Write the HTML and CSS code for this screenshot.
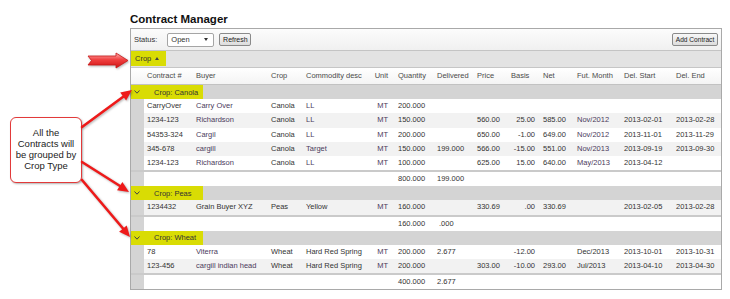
FILE: index.html
```html
<!DOCTYPE html>
<html>
<head>
<meta charset="utf-8">
<title>Contract Manager</title>
<link rel="stylesheet" href="styles.css">
</head>
<body>
<div class="page">
  <h1 class="title">Contract Manager</h1>
  <div class="panel">
    <div class="toolbar">
      <span class="lbl">Status:</span>
      <span class="select">Open<span class="caret"></span></span>
      <span class="btn refresh">Refresh</span>
      <span class="btn add">Add Contract</span>
    </div>
    <div class="groupby"><span class="chip">Crop <span class="up"></span></span></div>
    <div class="row head">
      <span class="ind"></span><span>Contract #</span><span>Buyer</span><span>Crop</span><span>Commodity desc</span><span class="r unit">Unit</span><span>Quantity</span><span>Delivered</span><span>Price</span><span class="basis-h">Basis</span><span>Net</span><span>Fut. Month</span><span>Del. Start</span><span>Del. End</span>
    </div>

    <div class="gbar"><span class="hl"><svg class="chev" width="6" height="4" viewBox="0 0 6 4"><polyline points="0.5,0.5 3,3.2 5.5,0.5"/></svg><span class="gtxt">Crop: Canola</span></span></div>
    <div class="row data"><span class="ind"></span><span>CarryOver</span><span class="lk">Carry Over</span><span>Canola</span><span class="lk">LL</span><span class="r unit lk">MT</span><span>200.000</span><span></span><span></span><span class="r basis"></span><span></span><span></span><span></span><span></span></div>
    <div class="row data alt"><span class="ind"></span><span>1234-123</span><span class="lk">Richardson</span><span>Canola</span><span class="lk">LL</span><span class="r unit lk">MT</span><span>150.000</span><span></span><span>560.00</span><span class="r basis">25.00</span><span>585.00</span><span class="lk">Nov/2012</span><span>2013-02-01</span><span>2013-02-28</span></div>
    <div class="row data"><span class="ind"></span><span>54353-324</span><span class="lk">Cargil</span><span>Canola</span><span class="lk">LL</span><span class="r unit lk">MT</span><span>200.000</span><span></span><span>650.00</span><span class="r basis">-1.00</span><span>649.00</span><span class="lk">Nov/2012</span><span>2013-11-01</span><span>2013-11-29</span></div>
    <div class="row data alt"><span class="ind"></span><span>345-678</span><span class="lk">cargill</span><span>Canola</span><span class="lk">Target</span><span class="r unit lk">MT</span><span>150.000</span><span>199.000</span><span>566.00</span><span class="r basis">-15.00</span><span>551.00</span><span class="lk">Nov/2013</span><span>2013-09-19</span><span>2013-09-30</span></div>
    <div class="row data"><span class="ind"></span><span>1234-123</span><span class="lk">Richardson</span><span>Canola</span><span class="lk">LL</span><span class="r unit lk">MT</span><span>100.000</span><span></span><span>625.00</span><span class="r basis">15.00</span><span>640.00</span><span class="lk">May/2013</span><span>2013-04-12</span><span></span></div>
    <div class="row sum"><span class="ind"></span><span></span><span></span><span></span><span></span><span></span><span>800.000</span><span>199.000</span><span></span><span></span><span></span><span></span><span></span><span></span></div>

    <div class="gbar"><span class="hl"><svg class="chev" width="6" height="4" viewBox="0 0 6 4"><polyline points="0.5,0.5 3,3.2 5.5,0.5"/></svg><span class="gtxt">Crop: Peas</span></span></div>
    <div class="row data alt"><span class="ind"></span><span>1234432</span><span>Grain Buyer XYZ</span><span>Peas</span><span>Yellow</span><span class="r unit lk">MT</span><span>160.000</span><span></span><span>330.69</span><span class="r basis">.00</span><span>330.69</span><span></span><span>2013-02-05</span><span>2013-02-28</span></div>
    <div class="row sum"><span class="ind"></span><span></span><span></span><span></span><span></span><span></span><span>160.000</span><span class="dot">.000</span><span></span><span></span><span></span><span></span><span></span><span></span></div>

    <div class="gbar"><span class="hl"><svg class="chev" width="6" height="4" viewBox="0 0 6 4"><polyline points="0.5,0.5 3,3.2 5.5,0.5"/></svg><span class="gtxt">Crop: Wheat</span></span></div>
    <div class="row data"><span class="ind"></span><span>78</span><span class="lk">Viterra</span><span>Wheat</span><span>Hard Red Spring</span><span class="r unit lk">MT</span><span>200.000</span><span>2.677</span><span></span><span class="r basis">-12.00</span><span></span><span>Dec/2013</span><span>2013-10-01</span><span>2013-10-31</span></div>
    <div class="row data alt"><span class="ind"></span><span>123-456</span><span class="lk">cargill indian head</span><span>Wheat</span><span>Hard Red Spring</span><span class="r unit lk">MT</span><span>200.000</span><span></span><span>303.00</span><span class="r basis">-10.00</span><span>293.00</span><span>Jul/2013</span><span>2013-04-10</span><span>2013-04-30</span></div>
    <div class="row sum"><span class="ind"></span><span></span><span></span><span></span><span></span><span></span><span>400.000</span><span>2.677</span><span></span><span></span><span></span><span></span><span></span><span></span></div>
  </div>

  <div class="callout"><p>All the<br>Contracts will<br>be grouped by<br>Crop Type</p></div>

  <svg class="annot" width="730" height="299" viewBox="0 0 730 299">
    <defs>
      <linearGradient id="ba" x1="0" y1="0" x2="0" y2="1">
        <stop offset="0" stop-color="#ffb0b0"/>
        <stop offset="0.45" stop-color="#f04040"/>
        <stop offset="1" stop-color="#d01414"/>
      </linearGradient>
    </defs>
    <polygon points="88,56 91.5,60.5 88,65 116,65 116,68 128,60.5 116,53 116,56" fill="url(#ba)" stroke="#c81818" stroke-width="0.8"/>
    <g stroke="#ee1a1a" stroke-width="2.6" fill="none" stroke-linecap="round">
      <line x1="82" y1="127" x2="123.5" y2="96.5"/>
      <line x1="82" y1="162" x2="120" y2="186"/>
      <line x1="82" y1="180" x2="123" y2="228.5"/>
    </g>
    <g fill="#ee1a1a">
      <polygon points="132,90 126.1,100.6 120.2,92.5"/>
      <polygon points="129,192 117,190.3 122.4,181.9"/>
      <polygon points="130,237 119.1,231.8 126.7,225.4"/>
    </g>
  </svg>
</div>
</body>
</html>
```

FILE: styles.css
```css
* { box-sizing: border-box; }
html, body { margin: 0; padding: 0; background: #fff; }
body { font-family: "Liberation Sans", Arial, sans-serif; }

.page { position: relative; width: 730px; height: 299px; overflow: hidden; }

.title {
  margin: 0;
  padding: 10px 0 0 130px;
  height: 28px;
  font-size: 11.5px;
  line-height: 18px;
  font-weight: bold;
  color: #111;
}

.panel {
  margin-left: 130px;
  width: 592px;
  border: 1px solid #a9a9a9;
  font-size: 7.5px;
  color: #333;
  background: #fff;
}

.toolbar {
  height: 22px;
  display: flex;
  align-items: center;
  padding: 0 3px;
  background: linear-gradient(#fcfcfc, #f0f0f0);
  border-bottom: 1px solid #c4c4c4;
}
.lbl { color: #333; }
.select {
  position: relative;
  margin-left: 10px;
  width: 47px;
  height: 14px;
  line-height: 12px;
  padding-left: 3px;
  border: 1px solid #a5a5a5;
  border-radius: 2px;
  background: #fff;
  color: #333;
}
.caret {
  position: absolute;
  right: 5px;
  top: 4.5px;
  width: 0;
  height: 0;
  border-left: 2.5px solid transparent;
  border-right: 2.5px solid transparent;
  border-top: 3px solid #333;
}
.btn {
  height: 13px;
  line-height: 11px;
  border: 1px solid #8a8a8a;
  border-radius: 2px;
  background: linear-gradient(#f8f8f8, #dcdcdc);
  color: #222;
  text-align: center;
  font-size: 7px;
}
.refresh { margin-left: 5px; width: 32px; }
.add { margin-left: auto; width: 46px; font-size: 6.6px; }

.groupby {
  height: 17px;
  background: #e3e3e3;
  border-bottom: 1px solid #c6c6c6;
}
.chip {
  display: inline-flex;
  align-items: center;
  gap: 4px;
  width: 35px;
  height: 15px;
  padding-left: 4px;
  background: #d9dc04;
  color: #333;
}
.up {
  width: 0;
  height: 0;
  border-left: 2.5px solid transparent;
  border-right: 2.5px solid transparent;
  border-bottom: 3px solid #444;
}

.row {
  display: grid;
  grid-template-columns: 13px 49px 75px 35px 64px 28px 39px 40px 33px 33px 34px 47px 52px 48px;
}
.row > span {
  padding-left: 3px;
  white-space: nowrap;
  overflow: hidden;
}
.row > .r { text-align: right; padding-left: 0; }
.row > .unit { padding-right: 7px; }
.row > .basis { padding-right: 5px; }
.row > .basis-h { padding-left: 4px; }
.row > .ind { padding: 0; background: #d4d4d4; }

.head {
  height: 17px;
  line-height: 16px;
  background: linear-gradient(#ffffff, #f4f4f4);
  border-bottom: 1px solid #c2c2c2;
  color: #4a4a4a;
}
.head > .ind { background: transparent; }

.data { height: 14.3px; line-height: 14.3px; }
.data.alt > span:not(.ind) { background: #f2f2f2; }
.lk { color: #4b3a5c; }

.sum {
  height: 16px;
  line-height: 14px;
  border-top: 2px solid #cacaca;
}
.sum > .ind { background: #d4d4d4; }
.dot { padding-left: 5px !important; }

.gbar {
  height: 14px;
  background: #d4d4d4;
}
.hl {
  display: flex;
  align-items: center;
  width: 72px;
  height: 14px;
  padding-left: 3px;
  background: #d9dc04;
  color: #333;
}
.chev polyline { fill: none; stroke: #444; stroke-width: 1; }
.gtxt { margin-left: 14px; }

.callout {
  position: absolute;
  left: 10px;
  top: 117px;
  width: 72px;
  height: 66px;
  border: 1.5px solid #e23a3a;
  border-radius: 6px;
  background: #fff;
  box-shadow: 1px 1px 2px rgba(0,0,0,0.3);
  display: flex;
  align-items: center;
  justify-content: center;
}
.callout p {
  margin: 0;
  text-align: center;
  font-size: 9.5px;
  line-height: 10.8px;
  color: #222;
}

.annot {
  position: absolute;
  left: 0;
  top: 0;
  pointer-events: none;
  filter: drop-shadow(1px 1px 1px rgba(0,0,0,0.3));
}
```
